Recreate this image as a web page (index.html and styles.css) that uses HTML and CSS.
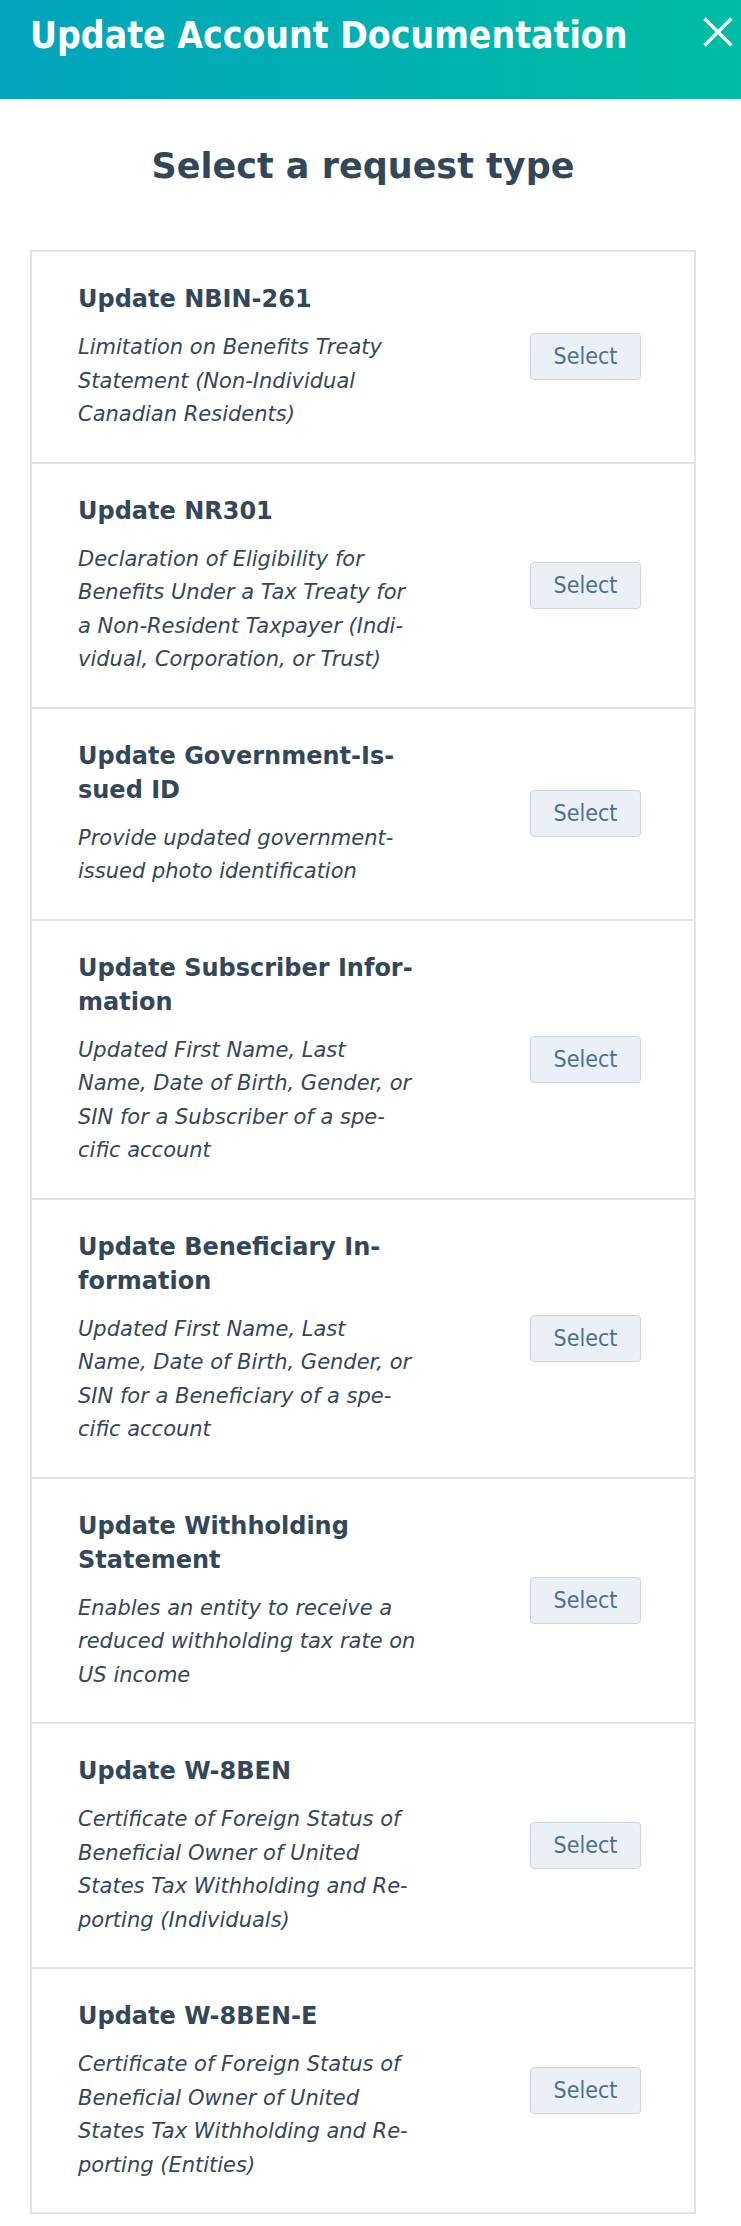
FILE: index.html
```html
<!DOCTYPE html>
<html lang="en">
<head>
<meta charset="utf-8">
<title>Update Account Documentation</title>
<link rel="stylesheet" href="styles.css">
</head>
<body>
<header class="panel-header">
  <h1 class="panel-title">Update Account Documentation</h1>
  <button class="close-btn" aria-label="Close">
    <svg width="30" height="30" viewBox="0 0 30 30" fill="none"><path d="M1.5 1.5 L28.5 28.5 M28.5 1.5 L1.5 28.5" stroke="#ffffff" stroke-width="3.2"/></svg>
  </button>
</header>
<main class="panel-body">
  <h2 class="section-title">Select a request type</h2>
  <ul class="request-list">
    <li class="request-row">
      <div class="request-text">
        <h3 class="request-name">Update NBIN-261</h3>
        <p class="request-desc">Limitation on Benefits Treaty<br>Statement (Non-Individual<br>Canadian Residents)</p>
      </div>
      <button class="select-btn">Select</button>
    </li>
    <li class="request-row">
      <div class="request-text">
        <h3 class="request-name">Update NR301</h3>
        <p class="request-desc">Declaration of Eligibility for<br>Benefits Under a Tax Treaty for<br>a Non-Resident Taxpayer (Indi-<br>vidual, Corporation, or Trust)</p>
      </div>
      <button class="select-btn">Select</button>
    </li>
    <li class="request-row">
      <div class="request-text">
        <h3 class="request-name">Update Government-Is-<br>sued ID</h3>
        <p class="request-desc">Provide updated government-<br>issued photo identification</p>
      </div>
      <button class="select-btn">Select</button>
    </li>
    <li class="request-row">
      <div class="request-text">
        <h3 class="request-name">Update Subscriber Infor-<br>mation</h3>
        <p class="request-desc">Updated First Name, Last<br>Name, Date of Birth, Gender, or<br>SIN for a Subscriber of a spe-<br>cific account</p>
      </div>
      <button class="select-btn">Select</button>
    </li>
    <li class="request-row">
      <div class="request-text">
        <h3 class="request-name">Update Beneficiary In-<br>formation</h3>
        <p class="request-desc">Updated First Name, Last<br>Name, Date of Birth, Gender, or<br>SIN for a Beneficiary of a spe-<br>cific account</p>
      </div>
      <button class="select-btn">Select</button>
    </li>
    <li class="request-row">
      <div class="request-text">
        <h3 class="request-name">Update Withholding<br>Statement</h3>
        <p class="request-desc">Enables an entity to receive a<br>reduced withholding tax rate on<br>US income</p>
      </div>
      <button class="select-btn">Select</button>
    </li>
    <li class="request-row">
      <div class="request-text">
        <h3 class="request-name">Update W-8BEN</h3>
        <p class="request-desc">Certificate of Foreign Status of<br>Beneficial Owner of United<br>States Tax Withholding and Re-<br>porting (Individuals)</p>
      </div>
      <button class="select-btn">Select</button>
    </li>
    <li class="request-row">
      <div class="request-text">
        <h3 class="request-name">Update W-8BEN-E</h3>
        <p class="request-desc">Certificate of Foreign Status of<br>Beneficial Owner of United<br>States Tax Withholding and Re-<br>porting (Entities)</p>
      </div>
      <button class="select-btn">Select</button>
    </li>
  </ul>
</main>
</body>
</html>
```
FILE: styles.css
```css
* { box-sizing: border-box; }

html, body {
  margin: 0;
  padding: 0;
  background: #ffffff;
}

body {
  font-family: "DejaVu Sans", "Liberation Sans", sans-serif;
  color: #33475b;
}

.panel-header {
  height: 99px;
  display: flex;
  justify-content: space-between;
  align-items: flex-start;
  padding: 14px 8px 0 30px;
  background: linear-gradient(to right, #00a4bd, #00bda5);
}

.panel-title {
  margin: 0;
  font-family: "DejaVu Sans Condensed", "DejaVu Sans", sans-serif;
  font-stretch: condensed;
  font-weight: 700;
  font-size: 37px;
  line-height: 44px;
  color: #ffffff;
  white-space: nowrap;
}

.close-btn {
  margin: 3px 0 0 0;
  padding: 0;
  width: 30px;
  height: 30px;
  border: 0;
  background: transparent;
  display: block;
}

.close-btn svg { display: block; }

.panel-body {
  width: 726px;
  padding: 46px 30px 12px 30px;
}

.section-title {
  margin: 0;
  text-align: center;
  font-weight: 700;
  font-size: 35px;
  line-height: 42px;
  color: #33475b;
}

.request-list {
  list-style: none;
  margin: 63px 0 0 0;
  padding: 0;
  border: 2px solid #dfe3eb;
}

.request-row {
  display: flex;
  align-items: center;
  justify-content: space-between;
  padding: 30px 53px 30px 46px;
}

.request-row + .request-row {
  border-top: 2px solid #dfe3eb;
}

.request-text {
  width: 352px;
}

.request-name {
  margin: 0 0 15px 0;
  font-weight: 700;
  font-size: 24px;
  line-height: 34px;
  color: #33475b;
}

.request-desc {
  margin: 0;
  font-style: italic;
  font-size: 21px;
  line-height: 33.5px;
  color: #33475b;
}

.select-btn {
  width: 111px;
  height: 47px;
  padding: 0;
  border: 1px solid #cbd6e2;
  border-radius: 4px;
  background: #eaf0f6;
  color: #516f90;
  font-family: "DejaVu Sans Condensed", "DejaVu Sans", sans-serif;
  font-stretch: condensed;
  font-size: 23px;
  line-height: 45px;
}
```
